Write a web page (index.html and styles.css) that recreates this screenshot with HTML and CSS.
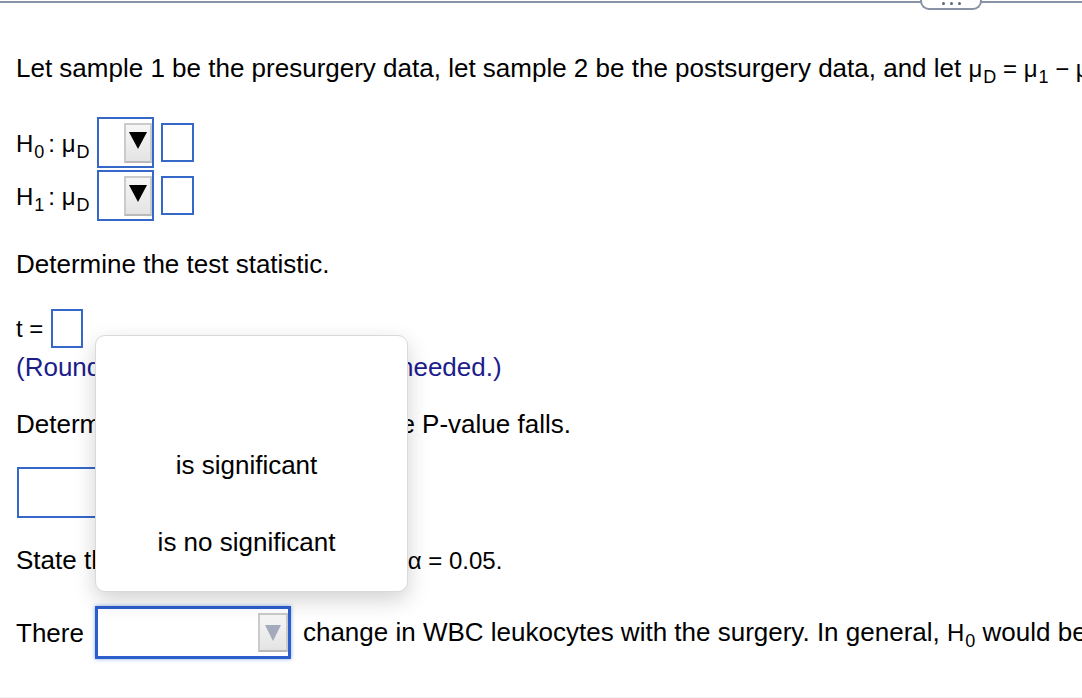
FILE: index.html
```html
<!DOCTYPE html>
<html lang="en">
<head>
  <meta charset="UTF-8">
  <title>Paired t-test</title>
  <link rel="stylesheet" href="styles.css">
</head>
<body>

<!-- barra superior con la pestaña de opciones -->
<div class="topbar">
  <span class="tab"><i></i><i></i><i></i></span>
</div>

<div class="page">

  <p class="line">Let sample 1 be the presurgery data, let sample 2 be the postsurgery data, and let <span class="math">μ<sub>D</sub> = μ<sub>1</sub> − μ<sub>2</sub></span></p>

  <!-- hipótesis -->
  <div class="hyps">
    <div class="hyp-row">
      <span class="math hyp-label">H<sub>0</sub><span class="rel">:</span> μ<sub>D</sub></span>
      <span class="select"><span class="drop"><span class="arrow"></span></span></span>
      <span class="answer"></span>
    </div>
    <div class="hyp-row">
      <span class="math hyp-label">H<sub>1</sub><span class="rel">:</span> μ<sub>D</sub></span>
      <span class="select"><span class="drop"><span class="arrow"></span></span></span>
      <span class="answer"></span>
    </div>
  </div>

  <p class="line gap-28">Determine the test statistic.</p>

  <div class="t-row">
    <span class="math t-label">t =</span>
    <span class="answer"></span>
  </div>
  <p class="line note">(Round to two decimal places as needed.)</p>

  <p class="line gap-27">Determine the interval in which the P-value falls.</p>

  <div class="big-answer"></div>

  <p class="line gap-27">State the conclusion of the test at <span class="math">α = 0.05.</span></p>

  <div class="there-row">
    <span>There</span>
    <span class="select wide"><span class="drop"><span class="arrow muted"></span></span></span>
    <span class="after">change in WBC leukocytes with the surgery. In general, <span class="math">H<sub>0</sub></span> would be rejected.</span>
  </div>

  <div class="band"></div>

  <!-- menú desplegable abierto -->
  <div class="popup">
    <div class="option"></div>
    <div class="option">is significant</div>
    <div class="option">is no significant</div>
  </div>

</div>

</body>
</html>
```

FILE: styles.css
```css
body {
  margin: 0;
  font-family: "Liberation Sans", Arial, sans-serif;
  font-size: 26px;
  line-height: 30px;
  color: #000;
  background-color: #fff;
  overflow: hidden;
}

/* barra superior */
.topbar {
  position: relative;
  height: 2px;
  margin-top: 1px;
  background-color: #8893a5;
}

.tab {
  position: absolute;
  left: 920px;
  top: -3px;
  width: 58px;
  height: 10px;
  border: 2px solid #8893a5;
  border-top: none;
  border-radius: 0 0 9px 9px;
  background-color: #fff;
  display: flex;
  justify-content: center;
  align-items: center;
  gap: 5px;
}

.tab i {
  width: 3px;
  height: 3px;
  border-radius: 50%;
  background-color: #5d6675;
}

.page {
  position: relative;
  padding: 50px 0 0 16px;
}

.line {
  margin: 0;
  white-space: nowrap;
}

.gap-28 { margin-top: 28px; }
.gap-27 { margin-top: 27px; }

.math {
  font-size: 24px;
}

.math sub {
  font-size: 18px;
  line-height: 0;
  vertical-align: -6px;
  margin-left: 1px;
}

.rel {
  margin-left: 4px;
}

/* hipótesis */
.hyps {
  margin-top: 33px;
  display: flex;
  flex-direction: column;
  gap: 2px;
}

.hyp-row {
  display: flex;
  align-items: center;
  height: 51px;
}

.hyp-label {
  width: 81px;
  padding-top: 3px;
  white-space: nowrap;
}

.select {
  box-sizing: border-box;
  flex-shrink: 0;
  width: 57px;
  height: 51px;
  border: 2px solid #3568c9;
  display: flex;
  justify-content: flex-end;
  align-items: center;
  background-color: #fff;
}

.drop {
  box-sizing: border-box;
  width: 28px;
  height: 40px;
  border: 2px solid #cbcbcb;
  border-bottom-color: #b9b9b9;
  background: linear-gradient(#f6f6f6, #e4e4e4);
  display: flex;
  justify-content: center;
  padding-top: 7px;
}

.arrow {
  width: 0;
  height: 0;
  border-left: 9px solid transparent;
  border-right: 9px solid transparent;
  border-top: 17px solid #000;
}

.arrow.muted {
  border-left-width: 8px;
  border-right-width: 8px;
  border-top: 16px solid #a2aabb;
}

.answer {
  box-sizing: border-box;
  flex-shrink: 0;
  width: 33px;
  height: 39px;
  margin-left: 7px;
  border: 2px solid #3568c9;
}

/* estadístico t */
.t-row {
  display: flex;
  align-items: center;
  height: 39px;
  margin-top: 30px;
}

.t-label {
  width: 35px;
  white-space: nowrap;
}

.t-row .answer {
  width: 32px;
  margin-left: 0;
}

.note {
  margin-top: 4px;
  color: #1c1c8c;
}

.big-answer {
  box-sizing: border-box;
  width: 120px;
  height: 51px;
  margin: 28px 0 0 1px;
  border: 2px solid #3568c9;
}

/* conclusión */
.there-row {
  display: flex;
  align-items: center;
  height: 53px;
  margin-top: 30px;
  white-space: nowrap;
}

.select.wide {
  width: 196px;
  height: 53px;
  margin-left: 11px;
  border: 3px solid #2c5fcc;
  box-shadow: 0 0 4px rgba(44, 95, 204, 0.55);
}

.select.wide .drop {
  width: 30px;
  height: 39px;
  padding-top: 10px;
}

.after {
  margin-left: 12px;
}

.band {
  height: 10px;
  margin-top: 38px;
  margin-left: -16px;
  background-color: #f2f2f2;
}

/* menú desplegable */
.popup {
  position: absolute;
  left: 95px;
  top: 332px;
  box-sizing: border-box;
  width: 313px;
  height: 257px;
  padding: 13px 10px 13px 0;
  border: 1px solid #d9d9d9;
  border-radius: 10px;
  background-color: #fff;
  box-shadow: 0 8px 22px rgba(0, 0, 0, 0.18);
}

.option {
  height: 77px;
  display: flex;
  justify-content: center;
  align-items: center;
}
```
